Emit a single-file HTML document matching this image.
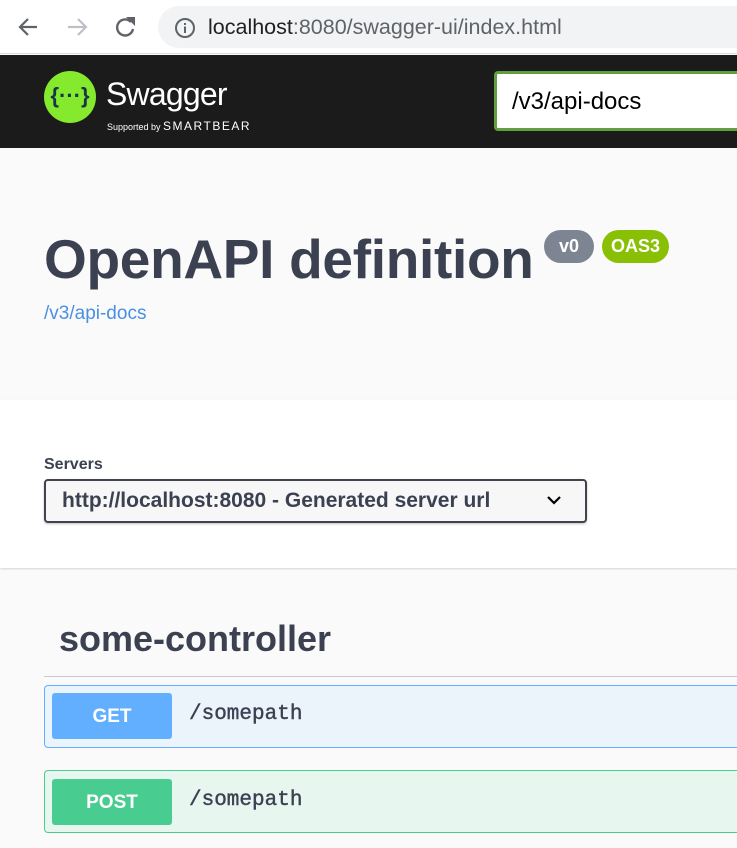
<!DOCTYPE html>
<html><head><meta charset="utf-8"><style>
*{margin:0;padding:0;box-sizing:border-box}
body{width:737px;height:848px;overflow:hidden;background:#fafafa;font-family:"Liberation Sans","Noto Sans CJK KR",sans-serif;position:relative}
.abs{position:absolute}
</style></head><body>
<div class="abs" style="left:0;top:0;width:737px;height:54px;background:#fff;border-bottom:1px solid #dadce0"></div>
<svg class="abs" style="left:16px;top:14px" width="130" height="26" viewBox="0 0 130 26">
<path d="M21 13H4M12 5l-8 8 8 8" fill="none" stroke="#5f6368" stroke-width="2.2"/>
<path d="M52 13h18M62 5l8 8-8 8" fill="none" stroke="#bdc1c6" stroke-width="2.2"/>
<path d="M115 8a8 8 0 1 0 2 7" fill="none" stroke="#5f6368" stroke-width="2.4"/>
<path d="M110 3h9v9z" fill="#5f6368"/>
</svg>
<div class="abs" style="left:158px;top:6px;width:600px;height:42px;border-radius:21px;background:#f1f3f4"></div>
<svg class="abs" style="left:173px;top:16px" width="24" height="24" viewBox="0 0 24 24"><circle cx="12" cy="12" r="9" fill="none" stroke="#5f6368" stroke-width="2"/><rect x="11" y="10.5" width="2" height="6.5" fill="#5f6368"/><rect x="11" y="7" width="2" height="2" fill="#5f6368"/></svg>
<div class="abs" style="left:208px;top:15px;font-size:21.5px;color:#202124">localhost<span style="color:#5f6368">:8080/swagger-ui/index.html</span></div>

<div class="abs" style="left:0;top:55px;width:737px;height:93px;background:#1b1b1b"></div>
<div class="abs" style="left:44px;top:71px;width:52px;height:52px;border-radius:50%;background:#85ea2d;color:#173647;font-weight:bold;font-size:22px;text-align:center;line-height:50px">{···}</div>
<div class="abs" style="left:106px;top:76px;font-size:32px;color:#fff;letter-spacing:-0.8px">Swagger</div>
<div class="abs" style="left:107px;top:119px;font-size:9px;color:#fff">Supported by <span style="font-size:12px;letter-spacing:1.5px">SMARTBEAR</span></div>
<div class="abs" style="left:494px;top:71px;width:260px;height:60px;background:#fff;border:3px solid #62a03f;border-radius:4px;font-size:24px;color:#000;padding:14px 0 0 15px">/v3/api-docs</div>

<div class="abs" style="left:44px;top:227px;font-size:55px;font-weight:bold;color:#3b4151;letter-spacing:-0.3px">OpenAPI definition</div>
<div class="abs" style="left:544px;top:230px;width:50px;height:33px;border-radius:17px;background:#7d8492;color:#fff;font-weight:bold;font-size:18px;text-align:center;line-height:33px">v0</div>
<div class="abs" style="left:602px;top:230px;width:67px;height:33px;border-radius:17px;background:#89bf04;color:#fff;font-weight:bold;font-size:18px;text-align:center;line-height:33px">OAS3</div>
<div class="abs" style="left:44px;top:303px;font-size:19px;color:#4990e2">/v3/api-docs</div>

<div class="abs" style="left:0;top:400px;width:737px;height:168px;background:#fff;box-shadow:0 1px 2px rgba(0,0,0,.15)"></div>
<div class="abs" style="left:44px;top:456px;font-size:16px;font-weight:bold;color:#3b4151">Servers</div>
<div class="abs" style="left:44px;top:479px;width:543px;height:44px;border:2px solid #41444e;border-radius:4px;background:#f7f7f7;box-shadow:0 1px 2px rgba(0,0,0,.25);font-size:21px;font-weight:bold;color:#3b4151;padding:8px 0 0 16px">http://localhost:8080 - Generated server url</div>
<svg class="abs" style="left:546px;top:494px" width="16" height="12" viewBox="0 0 16 12"><path d="M2 3l6 6 6-6" fill="none" stroke="#000" stroke-width="2.2"/></svg>

<div class="abs" style="left:59px;top:618px;font-size:36px;font-weight:bold;color:#3b4151">some-controller</div>
<div class="abs" style="left:44px;top:676px;width:700px;height:1px;background:#c8c9cc"></div>

<div class="abs" style="left:44px;top:685px;width:700px;height:63px;border:1px solid #61affe;border-radius:4px;background:#ebf3fb"></div>
<div class="abs" style="left:52px;top:693px;width:120px;height:46px;border-radius:3px;background:#61affe;color:#fff;font-weight:bold;font-size:19px;text-align:center;line-height:48px">GET</div>
<div class="abs" style="left:189px;top:703px;font-family:'Liberation Mono',monospace;font-size:21px;color:#3b4151;-webkit-text-stroke:0.4px #3b4151">/somepath</div>

<div class="abs" style="left:44px;top:770px;width:700px;height:63px;border:1px solid #49cc90;border-radius:4px;background:#e8f6f0"></div>
<div class="abs" style="left:52px;top:779px;width:120px;height:46px;border-radius:3px;background:#49cc90;color:#fff;font-weight:bold;font-size:19px;text-align:center;line-height:48px">POST</div>
<div class="abs" style="left:189px;top:789px;font-family:'Liberation Mono',monospace;font-size:21px;color:#3b4151;-webkit-text-stroke:0.4px #3b4151">/somepath</div>
</body></html>
